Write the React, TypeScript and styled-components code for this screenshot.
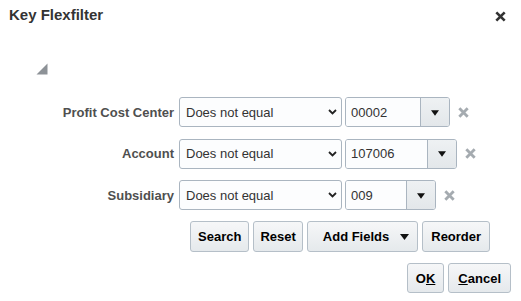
import React from "react";
import styled, { createGlobalStyle } from "styled-components";

const Global = createGlobalStyle`
  html, body { margin: 0; padding: 0; background: #fff; }
  body { font-family: "Liberation Sans", Arial, sans-serif; font-size: 13px; color: #333; }
  * { box-sizing: border-box; }
`;

const Dialog = styled.div`
  width: 521px;
  height: 301px;
  background: #fff;
  display: flex;
  flex-direction: column;
`;

const Header = styled.div`
  display: flex;
  justify-content: space-between;
  align-items: center;
  padding: 6px 14px 0 9px;
  height: 24px;
`;

const Title = styled.h1`
  margin: 0;
  font-size: 15px;
  line-height: 18px;
  font-weight: bold;
  color: #333;
`;

const CloseBtn = styled.button`
  border: 0;
  background: none;
  padding: 0;
  width: 12px;
  height: 12px;
  display: flex;
  cursor: pointer;
  margin-top: 4px;
`;

const Disclosure = styled.div`
  margin: 39px 0 0 36px;
  width: 12px;
  height: 12px;
  display: flex;
`;

const Form = styled.div`
  margin-top: 22px;
  display: flex;
  flex-direction: column;
  gap: 11.5px;
`;

const Row = styled.div`
  display: flex;
  align-items: center;
  height: 30px;
`;

const Label = styled.label`
  width: 174px;
  margin-right: 5px;
  text-align: right;
  font-weight: bold;
  color: #4f4f4f;
  white-space: nowrap;
`;

const SelectWrap = styled.div`
  position: relative;
  width: 163px;
  height: 30px;
  margin-right: 3px;
`;

const Select = styled.select`
  appearance: none;
  width: 100%;
  height: 100%;
  border: 1px solid #aab5c0;
  border-radius: 3px;
  background: #fcfdfe;
  font-family: "Liberation Sans", Arial, sans-serif;
  font-size: 13px;
  color: #333;
  padding: 0 20px 0 6px;
  outline: none;
`;

const Chevron = styled.span`
  position: absolute;
  right: 5px;
  top: 12px;
  display: flex;
  pointer-events: none;
`;

const Combo = styled.div<{ $w: number }>`
  display: flex;
  width: ${(p) => p.$w}px;
  height: 30px;
  border: 1px solid #aab5c0;
  border-radius: 3px;
  overflow: hidden;
`;

const ValueInput = styled.input`
  flex: 1;
  min-width: 0;
  border: 0;
  background: #fcfdfe;
  font-family: "Liberation Sans", Arial, sans-serif;
  font-size: 13px;
  color: #333;
  padding: 0 5px;
  outline: none;
`;

const ComboBtn = styled.button`
  width: 29px;
  border: 0;
  border-left: 1px solid #aab5c0;
  background: linear-gradient(#eef1f3, #e3e7ea);
  display: flex;
  align-items: center;
  justify-content: center;
  padding: 0;
  padding-top: 1px;
`;

const Clear = styled.button`
  border: 0;
  background: none;
  padding: 0;
  margin-left: 8px;
  width: 11px;
  height: 11px;
  display: flex;
`;

const ButtonBar = styled.div<{ $ml?: number; $mt: number }>`
  display: flex;
  gap: 4px;
  margin-top: ${(p) => p.$mt}px;
  margin-left: ${(p) => (p.$ml !== undefined ? `${p.$ml}px` : "auto")};
  margin-right: ${(p) => (p.$ml !== undefined ? "0" : "10px")};
`;

const Button = styled.button<{ $h?: number; $pl?: number; $pr?: number }>`
  height: ${(p) => p.$h ?? 31}px;
  padding: 0 ${(p) => p.$pr ?? 8}px 0 ${(p) => p.$pl ?? 8}px;
  border: 1px solid #b5bfc8;
  border-radius: 3px;
  background: linear-gradient(#f6f7f8, #e5e9ec);
  font-family: "Liberation Sans", Arial, sans-serif;
  font-size: 13px;
  font-weight: bold;
  color: #000;
  display: flex;
  align-items: center;
  white-space: pre;
  cursor: pointer;
  u { text-decoration: underline; }
`;

const ArrowSlot = styled.span`
  display: flex;
  margin-left: 11px;
`;

const DownTri = ({ w = 9 }: { w?: number }) => (
  <svg width={w} height="6" viewBox="0 0 9 6">
    <path d="M0 0 H9 L4.5 6 Z" fill="#111" />
  </svg>
);

const ChevronIcon = () => (
  <svg width="9" height="6" viewBox="0 0 9 6">
    <path d="M1 1 L4.5 4.5 L8 1" stroke="#222" strokeWidth="1.8" fill="none" />
  </svg>
);

const XIcon = ({ color, size, sw = 2.4 }: { color: string; size: number; sw?: number }) => (
  <svg width={size} height={size} viewBox="0 0 10 10">
    <path d="M1.2 1.2 L8.8 8.8 M8.8 1.2 L1.2 8.8" stroke={color} strokeWidth={sw} />
  </svg>
);

const rows = [
  { label: "Profit Cost Center", value: "00002", w: 105 },
  { label: "Account", value: "107006", w: 112 },
  { label: "Subsidiary", value: "009", w: 91 },
];

export default function App() {
  return (
    <>
      <Global />
      <Dialog>
        <Header>
          <Title>Key Flexfilter</Title>
          <CloseBtn aria-label="Close">
            <XIcon color="#333" size={11} />
          </CloseBtn>
        </Header>
        <Disclosure>
          <svg width="12" height="12" viewBox="0 0 12 12">
            <path d="M11.5 0.5 V11.5 H0.5 Z" fill="#8d9297" />
          </svg>
        </Disclosure>
        <Form>
          {rows.map((r) => (
            <Row key={r.label}>
              <Label>{r.label}</Label>
              <SelectWrap>
                <Select defaultValue="ne">
                  <option value="ne">Does not equal</option>
                  <option value="eq">Equals</option>
                </Select>
                <Chevron>
                  <ChevronIcon />
                </Chevron>
              </SelectWrap>
              <Combo $w={r.w}>
                <ValueInput defaultValue={r.value} />
                <ComboBtn>
                  <DownTri w={8} />
                </ComboBtn>
              </Combo>
              <Clear aria-label="Remove">
                <XIcon color="#a5abb0" size={11} sw={2.6} />
              </Clear>
            </Row>
          ))}
        </Form>
        <ButtonBar $ml={190} $mt={11}>
          <Button $pl={7} $pr={7}>Search</Button>
          <Button $pl={6} $pr={6}>Reset</Button>
          <Button $pl={15} $pr={8}>
            Add Fields
            <ArrowSlot>
              <DownTri w={9} />
            </ArrowSlot>
          </Button>
          <Button $pl={8} $pr={8}>Reorder</Button>
        </ButtonBar>
        <ButtonBar $mt={11}>
          <Button $h={30} $pl={8} $pr={8}>
            O<u>K</u>
          </Button>
          <Button $h={30} $pl={9} $pr={9}>
            <u>C</u>ancel
          </Button>
        </ButtonBar>
      </Dialog>
    </>
  );
}
